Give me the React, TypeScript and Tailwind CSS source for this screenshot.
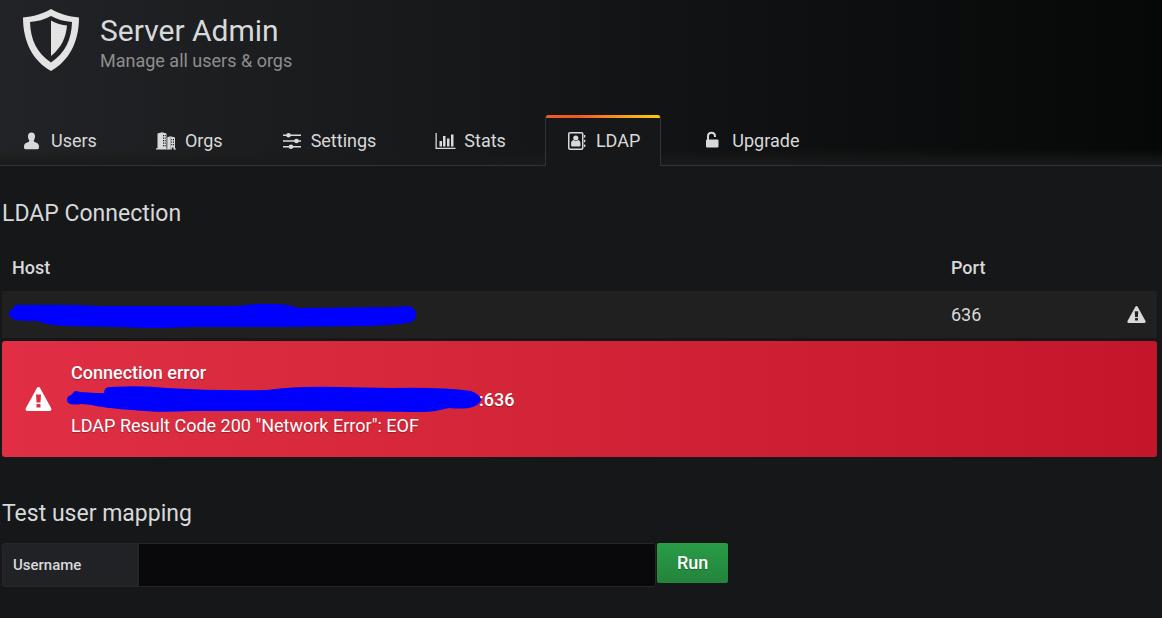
import type { ReactNode } from 'react'

function ShieldIcon() {
  return (
    <svg viewBox="0 0 56 62" className="h-[62px] w-14 shrink-0" fill="#e3e3e3" aria-hidden="true">
      <path
        fillRule="evenodd"
        d="M28 0C20 5 10 7.500 0 8.500C0 33 10 52 28 62C46 52 56 33 56 8.500C46 7.500 36 5 28 0ZM28 7C22 10.500 14 12.500 7 13C7.500 31 14 44 28 53.500C42 44 48.500 31 49 13C42 12.500 34 10.500 28 7Z"
      />
      <path d="M28 11.500C33 14.500 39 16 44 16.500C43 29 38 39 28 47Z" />
    </svg>
  )
}

function UserIcon() {
  return (
    <svg viewBox="0 0 20 20" className="h-5 w-5" fill="currentColor" aria-hidden="true">
      <path d="M9.500 1.500C11.800 1.500 13 3 13 5.200C13 7 12.600 8.300 11.800 9.200C11.600 10.400 12 10.900 13.300 11.300C15.800 12 17 13.300 17 15.600V16.500C17 17.600 16.300 18.200 15.200 18.200H3.800C2.700 18.200 2 17.600 2 16.500V15.600C2 13.300 3.200 12 5.700 11.300C7 10.900 7.400 10.400 7.200 9.200C6.400 8.300 6 7 6 5.200C6 3 7.200 1.500 9.500 1.500Z" />
    </svg>
  )
}

function OrgsIcon() {
  return (
    <svg viewBox="0 0 20 20" className="h-5 w-5" fill="currentColor" aria-hidden="true">
      <path d="M1.500 2.500L6 1.200V18.500H0V17.300H1.500Z" />
      <path
        fillRule="evenodd"
        d="M6 1.200L10.500 2.500V18.500H6ZM7 4V5.200H8V4ZM8.700 4V5.200H9.700V4ZM7 6.500V7.700H8V6.500ZM8.700 6.500V7.700H9.700V6.500ZM7 9V10.200H8V9ZM8.700 9V10.200H9.700V9ZM7 11.500V12.700H8V11.500ZM8.700 11.500V12.700H9.700V11.500ZM7 14V15.200H8V14ZM8.700 14V15.200H9.700V14Z"
      />
      <path d="M11.300 6.200L14.300 5.200V18.500H10.500V17.500H11.300Z" />
      <path
        fillRule="evenodd"
        d="M14.300 5.200L19 6.500V17.500H20V18.500H17.500V16.500H15.800V18.500H14.300ZM15.200 8V9.200H16.200V8ZM17 8V9.200H18V8ZM15.200 10.500V11.700H16.200V10.500ZM17 10.500V11.700H18V10.500ZM15.200 13V14.200H16.200V13ZM17 13V14.200H18V13Z"
      />
    </svg>
  )
}

function SettingsIcon() {
  return (
    <svg viewBox="0 0 20 20" className="h-5 w-5" fill="currentColor" aria-hidden="true">
      <path d="M1 3.500H19V5H1ZM1 9.200H19V10.700H1ZM1 15H19V16.500H1Z" />
      <circle cx="6.500" cy="4.200" r="2.300" />
      <circle cx="14.500" cy="10" r="2.300" />
      <circle cx="9" cy="15.800" r="2.300" />
    </svg>
  )
}

function StatsIcon() {
  return (
    <svg viewBox="0 0 20 20" className="h-5 w-[21px]" fill="currentColor" aria-hidden="true">
      <path d="M0 2H1.300V16.700H20V18H0ZM4 10H6.500V15.500H4ZM7.500 5H10V15.500H7.500ZM11.500 7.500H14V15.500H11.500ZM15.500 3.500H18V15.500H15.500Z" />
    </svg>
  )
}

function LdapIcon() {
  return (
    <svg viewBox="0 0 20 20" className="h-5 w-[22px]" fill="currentColor" aria-hidden="true">
      <path
        fillRule="evenodd"
        d="M3 1H14.500C15.600 1 16.500 1.900 16.500 3V17C16.500 18.100 15.600 19 14.500 19H3C1.900 19 1 18.100 1 17V3C1 1.900 1.900 1 3 1ZM3.200 2.500C2.700 2.500 2.500 2.700 2.500 3.200V16.800C2.500 17.300 2.700 17.500 3.200 17.500H14.300C14.800 17.500 15 17.300 15 16.800V3.200C15 2.700 14.800 2.500 14.300 2.500Z"
      />
      <path d="M17 4H18.300V6.500H17ZM17 8.700H18.300V11.200H17ZM17 13.500H18.300V16H17Z" />
      <path d="M8.800 4.500C10.400 4.500 11.400 5.500 11.400 7.100C11.400 8.500 10.700 9.600 8.800 9.600C6.900 9.600 6.200 8.500 6.200 7.100C6.200 5.500 7.200 4.500 8.800 4.500ZM6.500 9C7.800 10.500 9.800 10.500 11.100 9C12.800 9.500 13.500 10.600 13.500 12.500V14.500C13.500 15.100 13.200 15.400 12.600 15.400H5C4.400 15.400 4.100 15.100 4.100 14.500V12.500C4.100 10.600 4.800 9.500 6.500 9Z" />
    </svg>
  )
}

function UnlockIcon() {
  return (
    <svg viewBox="0 0 20 20" className="h-5 w-6" aria-hidden="true">
      <path d="M6 10V5.300C6 3 7.500 1.700 9.500 1.700S13 3 13 5.300V6" fill="none" stroke="currentColor" strokeWidth="2" />
      <rect x="4" y="8.500" width="12.500" height="8" rx="1" fill="currentColor" />
    </svg>
  )
}

function WarningIcon({ className }: { className: string }) {
  return (
    <svg viewBox="0 0 26 24" className={className} fill="currentColor" aria-hidden="true">
      <path
        fillRule="evenodd"
        d="M13 0C13.700 0 14.300 .4 14.600 1L25.700 21.300C26.400 22.600 25.600 24 24.200 24H1.800C.4 24-.4 22.600 .3 21.300L11.400 1C11.700 .4 12.300 0 13 0ZM10.500 7.500L11 15.500H15L15.500 7.500ZM11 17V20.500H15V17Z"
      />
    </svg>
  )
}

const tabs: { label: string; icon: ReactNode; active?: boolean }[] = [
  { label: 'Users', icon: <UserIcon /> },
  { label: 'Orgs', icon: <OrgsIcon /> },
  { label: 'Settings', icon: <SettingsIcon /> },
  { label: 'Stats', icon: <StatsIcon /> },
  { label: 'LDAP', icon: <LdapIcon />, active: true },
  { label: 'Upgrade', icon: <UnlockIcon /> },
]

function PageHeader() {
  return (
    <header className="border-b border-[#343436] bg-[linear-gradient(to_top,#1a1a1a,transparent_16px),linear-gradient(to_right,#222326,#060707)]">
      <div className="flex gap-[21px] px-[23px] pt-[9px]">
        <ShieldIcon />
        <div>
          <h1 className="text-[30px] leading-[44px]">Server Admin</h1>
          <div className="text-lg leading-4 text-[#8e8e8e]">Manage all users &amp; orgs</div>
        </div>
      </div>
      <nav className="mt-11 -mb-px flex gap-[19px] px-0.5">
        {tabs.map((tab) => (
          <a
            key={tab.label}
            href="#"
            className={
              tab.active
                ? 'relative flex h-[51px] items-center gap-2 overflow-hidden rounded-t-[3px] border-x border-[#343436] bg-[#161719] px-5'
                : 'flex h-[51px] items-center gap-2 px-5'
            }
          >
            {tab.active && (
              <span className="absolute inset-x-0 top-0 h-[3px] bg-linear-to-r from-[#f05a28] from-30% to-[#fbca0a] to-99%" />
            )}
            <span className="min-w-[21px]">{tab.icon}</span>
            <span className="text-lg">{tab.label}</span>
          </a>
        ))}
      </nav>
    </header>
  )
}

function HostTable() {
  return (
    <table className="w-full text-left text-lg">
      <thead>
        <tr className="h-[47px]">
          <th className="w-[939px] px-2.5 font-medium">Host</th>
          <th className="px-2.5 font-medium">Port</th>
          <th aria-label="Status" />
        </tr>
      </thead>
      <tbody>
        <tr className="h-[47px] bg-[#202020]">
          <td className="px-[7px]">
            <svg viewBox="0 -3 408 29" className="h-[29px] w-[408px]" fill="#0000fe" role="img" aria-label="Hidden host">
              <path d="M6 2Q60 1 90 3L140 3L227 3L248 1Q270 0 283 3L289 5L385 4L398 3Q407 4 407 11Q407 19 399 20Q385 22 360 23L275 24L180 24Q150 26 110 24L55 23Q35 22 29 18Q15 18 6 17Q0 15 0 10Q1 6 4 6Z" />
            </svg>
          </td>
          <td className="px-2.5">636</td>
          <td className="px-[11px]">
            <WarningIcon className="ml-auto h-[17px] w-[19px]" />
          </td>
        </tr>
      </tbody>
    </table>
  )
}

function ConnectionAlert() {
  return (
    <div
      role="alert"
      className="mt-[3px] flex items-center gap-[19px] rounded-[3px] bg-linear-to-r from-[#e02f44] to-[#c4162a] py-[18px] pr-5 pl-[23px] text-white [text-shadow:0_1px_1px_rgba(0,0,0,0.3)]"
    >
      <WarningIcon className="h-6 w-[27px] shrink-0" />
      <div className="text-lg leading-[27px]">
        <div className="font-medium">Connection error</div>
        <div className="-ml-1 flex h-[26px] items-center font-medium">
          <svg viewBox="0 0 414 26" className="h-[26px] w-[414px]" fill="#0000fe" role="img" aria-label="Hidden address">
            <path d="M8 5Q20 7 37 7Q37 1 43 1Q75-1 100 2Q150 5 200 4Q230 0 270 1L325 2Q375 1 404 5Q414 9 414 14Q412 20 402 22Q390 23 382 22Q365 27 345 26Q300 25 230 25L125 25Q90 27 65 24Q35 22 25 19L14 18Q0 20 0 14Q0 10 4 9Z" />
          </svg>
          <span className="-ml-0.5">:636</span>
        </div>
        <div>LDAP Result Code 200 "Network Error": EOF</div>
      </div>
    </div>
  )
}

function UserMappingForm() {
  return (
    <form className="flex items-start" onSubmit={(e) => e.preventDefault()}>
      <label
        htmlFor="username"
        className="flex h-11 w-[136px] items-center rounded-l-[3px] border border-[#262628] bg-[#212226] px-2.5 text-[15px] font-medium"
      >
        Username
      </label>
      <input
        id="username"
        type="text"
        className="mr-px h-11 w-[518px] rounded-r-[3px] border border-[#262628] bg-[#09090b] px-2.5 text-lg outline-none"
      />
      <button
        type="submit"
        className="h-10 rounded-xs bg-linear-to-b from-[#299c46] to-[#23843b] px-5 text-lg font-medium text-white [text-shadow:0_1px_1px_rgba(0,0,0,0.3)]"
      >
        Run
      </button>
    </form>
  )
}

export default function App() {
  return (
    <div className="min-h-screen bg-[#161719] font-[Roboto,sans-serif] text-[#d8d9da]">
      <PageHeader />
      <main className="pr-[5px] pl-0.5">
        <h3 className="pt-8 pb-3.5 text-[23px] leading-8">LDAP Connection</h3>
        <HostTable />
        <ConnectionAlert />
        <h3 className="pt-[41px] pb-[13px] text-[23px] leading-8">Test user mapping</h3>
        <UserMappingForm />
      </main>
    </div>
  )
}
